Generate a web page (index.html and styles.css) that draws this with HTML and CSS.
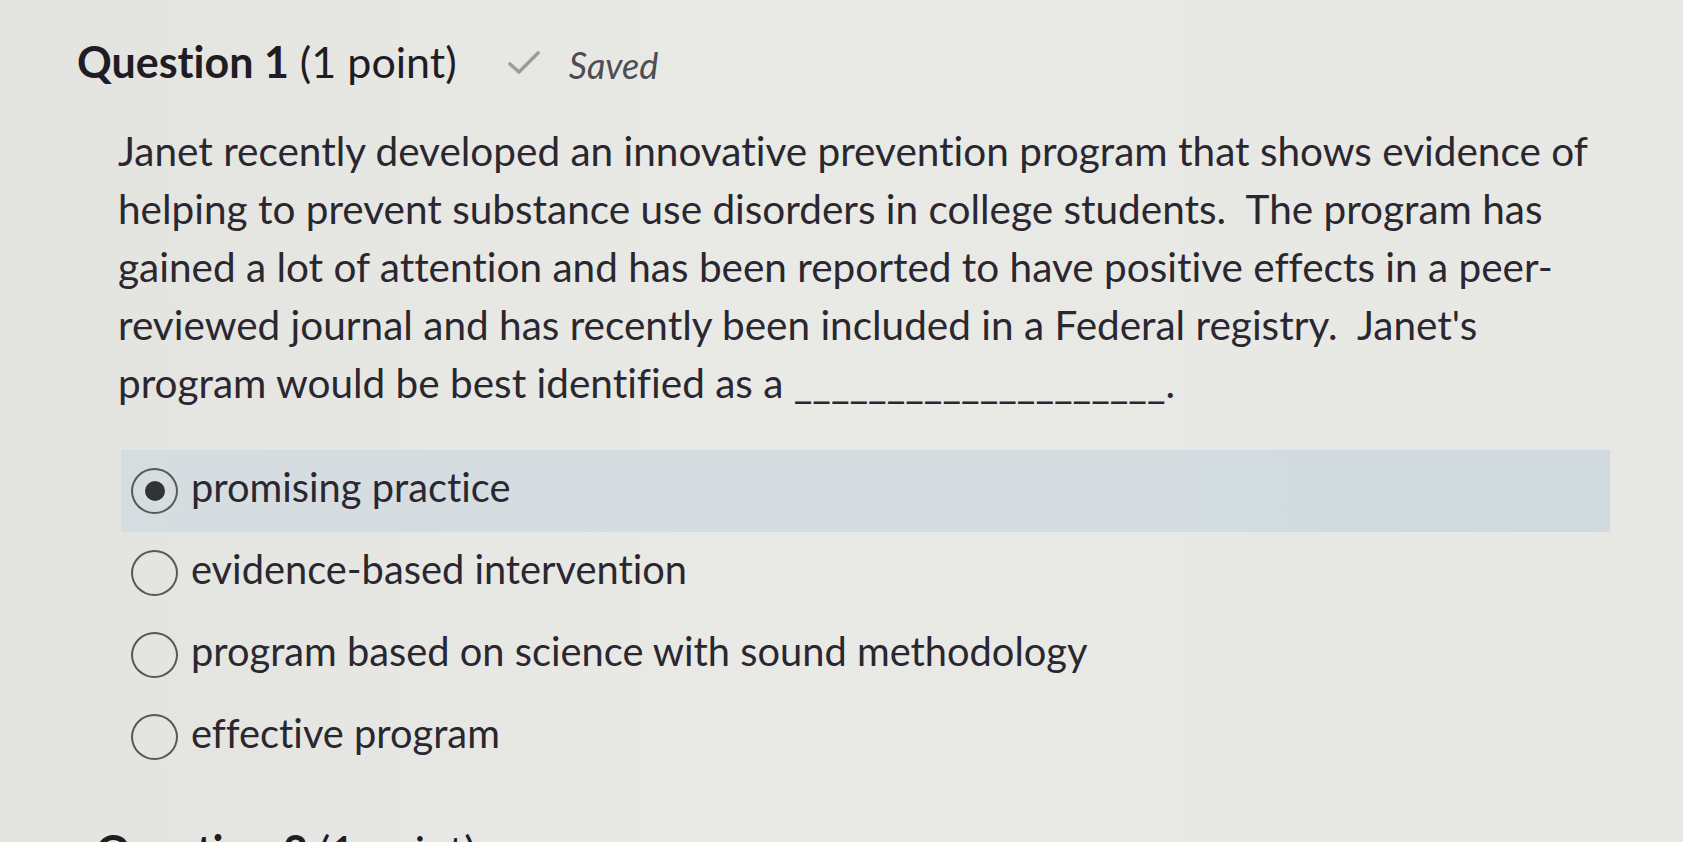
FILE: index.html
```html
<!DOCTYPE html>
<html lang="en">
<head>
<meta charset="utf-8">
<title>Question 1</title>
<link rel="stylesheet" href="styles.css">
</head>
<body>
<main class="page">
  <section class="question">
    <header class="q-head">
      <h2 class="q-title"><span class="q-num">Question 1</span> <span class="q-pts">(1 point)</span></h2>
      <span class="saved">
        <svg class="check" viewBox="0 0 34 26" width="34" height="26" aria-hidden="true"><path d="M3 14 L12 22 L31 3" fill="none" stroke="#9c9c9c" stroke-width="3.6" stroke-linecap="round" stroke-linejoin="round"/></svg>
        <em>Saved</em>
      </span>
    </header>
    <p class="q-text">Janet recently developed an innovative prevention program that shows evidence of helping to prevent substance use disorders in college students.&nbsp; The program has gained a lot of attention and has been reported to have positive effects in a peer-reviewed journal and has recently been included in a Federal registry.&nbsp; Janet's program would be best identified as a ____________________.</p>
    <ul class="options">
      <li class="option selected"><span class="radio"><span class="dot"></span></span><span class="label">promising practice</span></li>
      <li class="option"><span class="radio"></span><span class="label">evidence-based intervention</span></li>
      <li class="option"><span class="radio"></span><span class="label">program based on science with sound methodology</span></li>
      <li class="option"><span class="radio"></span><span class="label">effective program</span></li>
    </ul>
  </section>
  <section class="question next">
    <header class="q-head">
      <h2 class="q-title"><span class="q-num">Question 2</span> <span class="q-pts">(1 point)</span></h2>
    </header>
  </section>
</main>
</body>
</html>
```

FILE: styles.css
```css
html, body {
  margin: 0;
  padding: 0;
}
body {
  background: linear-gradient(90deg, #e3e3df 0%, #e9e9e5 45%, #e7e7e3 100%);
  font-family: Lato, "Open Sans", sans-serif;
  font-variant-ligatures: none;
  color: #2a2730;
  height: 842px;
  overflow: hidden;
}
.page {
  padding: 36px 0 0 77px;
}
.q-head {
  display: flex;
  align-items: baseline;
}
.q-title {
  margin: 0;
  font-size: 43px;
  line-height: 1.2;
  font-weight: 400;
  color: #1f1c24;
  white-space: nowrap;
}
.q-num {
  font-weight: 700;
}
.saved {
  display: inline-flex;
  align-items: center;
  margin-left: 50px;
  color: #4d4d52;
  font-size: 36px;
}
.check {
  margin-right: 28px;
  position: relative;
  top: -2px;
}
.saved em {
  font-style: italic;
}
.q-text {
  margin: 34px 0 0 41px;
  width: 1490px;
  font-size: 40.5px;
  line-height: 58px;
  color: #2a2730;
}
.options {
  list-style: none;
  margin: 38px 0 0 44px;
  padding: 0;
  width: 1489px;
}
.option {
  display: flex;
  align-items: center;
  height: 82px;
  padding-left: 10px;
  font-size: 39.8px;
}
.option.selected {
  background: linear-gradient(90deg, #d6dde0 0%, #d4dce0 60%, #d0dadf 100%);
}
.radio {
  box-sizing: border-box;
  width: 47px;
  height: 46px;
  border: 2px solid #58575c;
  border-radius: 50%;
  display: flex;
  align-items: center;
  justify-content: center;
  flex: none;
  margin-right: 13px;
}
.dot {
  width: 20px;
  height: 20px;
  border-radius: 50%;
  background: #333236;
}
.label {
  position: relative;
  top: -4px;
}
.next {
  margin-top: 47px;
  margin-left: 19px;
}
```
